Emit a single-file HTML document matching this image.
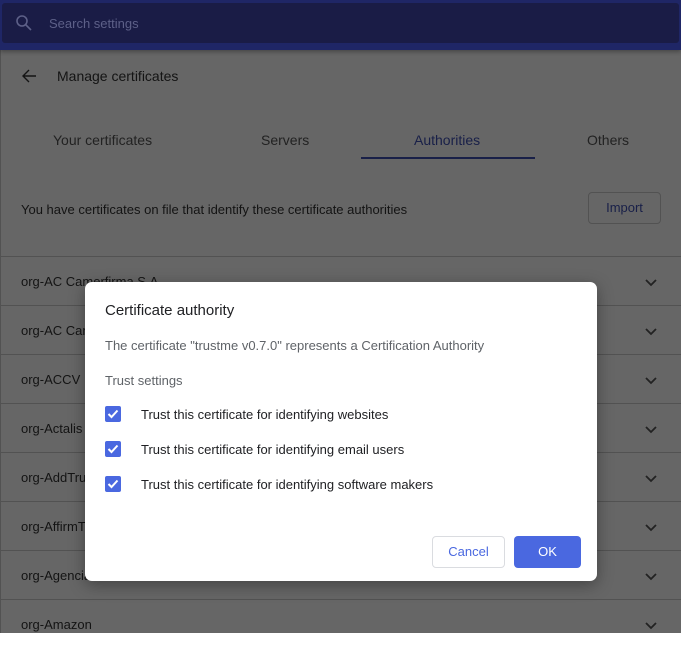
<!DOCTYPE html>
<html><head><style>
*{box-sizing:border-box;margin:0;padding:0}
body{width:681px;height:633px;overflow:hidden;background:#fff;font-family:"Liberation Sans",sans-serif;position:relative}
.hdr{position:absolute;left:0;top:0;width:681px;height:50px;background:#1f2666;z-index:5;box-shadow:0 2px 4px rgba(0,0,0,.3)}
.sb{position:absolute;left:2px;top:3px;width:677px;height:40px;background:#1a1c46;border-radius:3px}
.sb span{position:absolute;left:47px;top:13px;font-size:13px;color:#5d6088}
.ov{position:absolute;inset:0;background:rgba(0,0,0,.6);z-index:3}
.t{position:absolute;color:#333;font-size:13px}
.row{position:absolute;left:0;width:681px;height:49px;border-top:1px solid #ccc}
.row span{position:absolute;left:21px;top:17px;font-size:13px;color:#333}
.row svg{position:absolute;left:645px;top:22px}
.dlg{position:absolute;left:85px;top:282px;width:512px;height:299px;background:#fff;border-radius:7px;z-index:6;box-shadow:0 4px 16px rgba(0,0,0,.35)}
.dlg .t{color:#202124}
.cb{position:absolute;left:20px;width:16px;height:16px;background:#4a68e0;border-radius:2px}
.cb svg{position:absolute;left:1px;top:1px}
</style></head><body>
<div class="hdr"><div class="sb">
<svg style="position:absolute;left:13px;top:11px" width="18" height="18" viewBox="0 0 18 18"><circle cx="7" cy="7" r="5" fill="none" stroke="#5d6088" stroke-width="1.6"/><path d="M11 11l5 5" stroke="#5d6088" stroke-width="1.6"/></svg>
<span>Search settings</span></div></div>
<div style="position:absolute;left:0;top:50px;width:1px;height:583px;background:#ccc"></div>
<svg style="position:absolute;left:21px;top:68px" width="16" height="16" viewBox="0 0 16 16"><path d="M15 8H2M8 2L2 8l6 6" fill="none" stroke="#333" stroke-width="1.4"/></svg>
<div class="t" style="left:57px;top:68px;font-size:14px">Manage certificates</div>
<div class="t" style="left:53px;top:132px;font-size:14px;color:#555">Your certificates</div>
<div class="t" style="left:261px;top:132px;font-size:14px;color:#555">Servers</div>
<div class="t" style="left:414px;top:132px;font-size:14px;color:#3f51b5">Authorities</div>
<div class="t" style="left:587px;top:132px;font-size:14px;color:#555">Others</div>
<div style="position:absolute;left:361px;top:157px;width:174px;height:2px;background:#3f51b5"></div>
<div class="t" style="left:21px;top:202px">You have certificates on file that identify these certificate authorities</div>
<div style="position:absolute;left:588px;top:192px;width:73px;height:32px;border:1px solid #ccc;border-radius:4px;color:#3f51b5;font-size:13px;text-align:center;line-height:30px">Import</div>
<div class="row" style="top:256px"><span>org-AC Camerfirma S.A.</span><svg width="12" height="8" viewBox="0 0 12 8"><path d="M1 1l5 5 5-5" fill="none" stroke="#555" stroke-width="1.8"/></svg></div>
<div class="row" style="top:305px"><span>org-AC Camerfirma SA CIF</span><svg width="12" height="8" viewBox="0 0 12 8"><path d="M1 1l5 5 5-5" fill="none" stroke="#555" stroke-width="1.8"/></svg></div>
<div class="row" style="top:354px"><span>org-ACCV</span><svg width="12" height="8" viewBox="0 0 12 8"><path d="M1 1l5 5 5-5" fill="none" stroke="#555" stroke-width="1.8"/></svg></div>
<div class="row" style="top:403px"><span>org-Actalis S.p.A.</span><svg width="12" height="8" viewBox="0 0 12 8"><path d="M1 1l5 5 5-5" fill="none" stroke="#555" stroke-width="1.8"/></svg></div>
<div class="row" style="top:452px"><span>org-AddTrust AB</span><svg width="12" height="8" viewBox="0 0 12 8"><path d="M1 1l5 5 5-5" fill="none" stroke="#555" stroke-width="1.8"/></svg></div>
<div class="row" style="top:501px"><span>org-AffirmTrust</span><svg width="12" height="8" viewBox="0 0 12 8"><path d="M1 1l5 5 5-5" fill="none" stroke="#555" stroke-width="1.8"/></svg></div>
<div class="row" style="top:550px"><span>org-Agencia Catalana de Certificacio</span><svg width="12" height="8" viewBox="0 0 12 8"><path d="M1 1l5 5 5-5" fill="none" stroke="#555" stroke-width="1.8"/></svg></div>
<div class="row" style="top:599px"><span>org-Amazon</span><svg width="12" height="8" viewBox="0 0 12 8"><path d="M1 1l5 5 5-5" fill="none" stroke="#555" stroke-width="1.8"/></svg></div>
<div class="ov"></div>
<div class="dlg">
<div class="t" style="left:20px;top:20px;font-size:15px">Certificate authority</div>
<div class="t" style="left:20px;top:56px;color:#5f6368">The certificate "trustme v0.7.0" represents a Certification Authority</div>
<div class="t" style="left:20px;top:91px;color:#5f6368">Trust settings</div>
<div class="cb" style="top:124px"><svg width="14" height="14" viewBox="0 0 14 14"><path d="M2.5 7l3 3 6-6.5" fill="none" stroke="#fff" stroke-width="2"/></svg></div>
<div class="t" style="left:56px;top:125px">Trust this certificate for identifying websites</div>
<div class="cb" style="top:159px"><svg width="14" height="14" viewBox="0 0 14 14"><path d="M2.5 7l3 3 6-6.5" fill="none" stroke="#fff" stroke-width="2"/></svg></div>
<div class="t" style="left:56px;top:160px">Trust this certificate for identifying email users</div>
<div class="cb" style="top:194px"><svg width="14" height="14" viewBox="0 0 14 14"><path d="M2.5 7l3 3 6-6.5" fill="none" stroke="#fff" stroke-width="2"/></svg></div>
<div class="t" style="left:56px;top:195px">Trust this certificate for identifying software makers</div>
<div style="position:absolute;left:347px;top:254px;width:73px;height:32px;border:1px solid #dadce0;border-radius:4px;color:#4a68e0;font-size:13px;text-align:center;line-height:30px">Cancel</div>
<div style="position:absolute;left:429px;top:254px;width:67px;height:32px;background:#4a68e0;border-radius:4px;color:#fff;font-size:13px;text-align:center;line-height:32px">OK</div>
</div>
</body></html>
